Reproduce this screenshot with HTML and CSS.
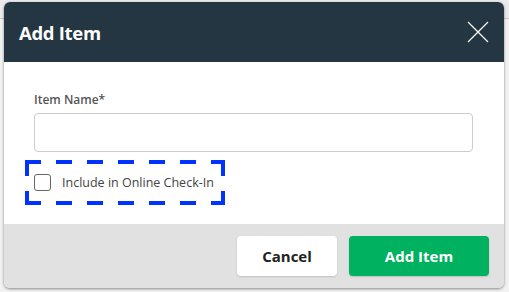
FILE: index.html
```html
<!DOCTYPE html>
<html lang="en">

<head>
    <meta charset="utf-8">
    <meta name="viewport" content="width=device-width, initial-scale=1.0">
    <title>Add Item</title>
    <link rel="stylesheet" href="styles.css">
</head>

<body>

    <div class="modal">
        <div class="modal-head">
            <h2>Add Item</h2>
            <button class="luk" aria-label="Close">
                <svg width="22" height="22" viewBox="0 0 22 22">
                    <path d="M1 1 L21 21 M21 1 L1 21" stroke="#ffffff" stroke-width="1.2" fill="none" />
                </svg>
            </button>
        </div>

        <div class="modal-body">
            <label class="felt-label" for="navn">Item Name*</label>
            <input id="navn" class="felt" type="text">

            <div class="fokus">
                <label class="tjek">
                    <span class="boks"></span>
                    Include in Online Check-In
                </label>
            </div>
        </div>

        <div class="modal-foot">
            <button class="knap annuller">Cancel</button>
            <button class="knap tilfoej">Add Item</button>
        </div>
    </div>

</body>

</html>
```

FILE: styles.css
```css
body {
    margin: 0;
    height: 292px;
    overflow: hidden;
    background: linear-gradient(#ebebeb 0, #ebebeb 18px, #c8c8c8 18px, #c8c8c8 19px, #f2f2f2 19px);
    font-family: "Open Sans", "Liberation Sans", sans-serif;
}

.modal {
    width: 500px;
    margin: 2px 0 0 4px;
    border-radius: 6px;
    overflow: hidden;
    background-color: white;
    box-shadow: 0 1px 3px rgba(0, 0, 0, 0.45);
}

.modal-head {
    height: 60px;
    background-color: #243642;
    display: flex;
    align-items: center;
    justify-content: space-between;
    padding: 0 15px 0 15px;
}

.modal-head h2 {
    margin: 0;
    color: white;
    font-size: 18.5px;
    font-weight: 700;
    letter-spacing: -0.3px;
}

.luk {
    background: none;
    border: none;
    padding: 0;
    width: 22px;
    height: 22px;
    display: flex;
}

.modal-body {
    height: 162px;
    padding: 29px 31px 0 30px;
    box-sizing: border-box;
    display: flex;
    flex-direction: column;
}

.felt-label {
    font-size: 12px;
    font-weight: 600;
    color: #555555;
    margin-bottom: 5px;
}

.felt {
    height: 39px;
    box-sizing: border-box;
    border: 1px solid #cccccc;
    border-radius: 4px;
    margin: 0;
}

.fokus {
    margin: 8px 0 0 -9px;
    width: 200px;
    height: 45px;
    box-sizing: border-box;
    padding: 0 0 0 9px;
    display: flex;
    align-items: center;
    background:
        repeating-linear-gradient(90deg, #0033ff 0 16px, transparent 16px 31px) top left / 100% 4px no-repeat,
        repeating-linear-gradient(90deg, #0033ff 0 16px, transparent 16px 31px) bottom left / 100% 4px no-repeat,
        repeating-linear-gradient(180deg, #0033ff 0 16px, transparent 16px 31px) top left / 4px 100% no-repeat,
        repeating-linear-gradient(180deg, #0033ff 0 16px, transparent 16px 31px) top right / 4px 100% no-repeat;
}

.tjek {
    display: flex;
    align-items: center;
    gap: 11px;
    font-size: 12.5px;
    color: #444444;
}

.boks {
    width: 17px;
    height: 17px;
    box-sizing: border-box;
    border: 1px solid #666666;
    border-radius: 3px;
    background-color: white;
}

.modal-foot {
    height: 64px;
    background-color: #e1e1e1;
    display: flex;
    justify-content: flex-end;
    align-items: center;
    gap: 12px;
    padding-right: 15px;
}

.knap {
    height: 40px;
    border: none;
    border-radius: 4px;
    font-family: "Open Sans", "Liberation Sans", sans-serif;
    font-size: 15px;
    font-weight: 700;
    box-shadow: 0 1px 2px rgba(0, 0, 0, 0.15);
}

.annuller {
    width: 100px;
    background-color: white;
    color: #222222;
}

.tilfoej {
    width: 140px;
    background-color: #00b160;
    color: white;
}
```
